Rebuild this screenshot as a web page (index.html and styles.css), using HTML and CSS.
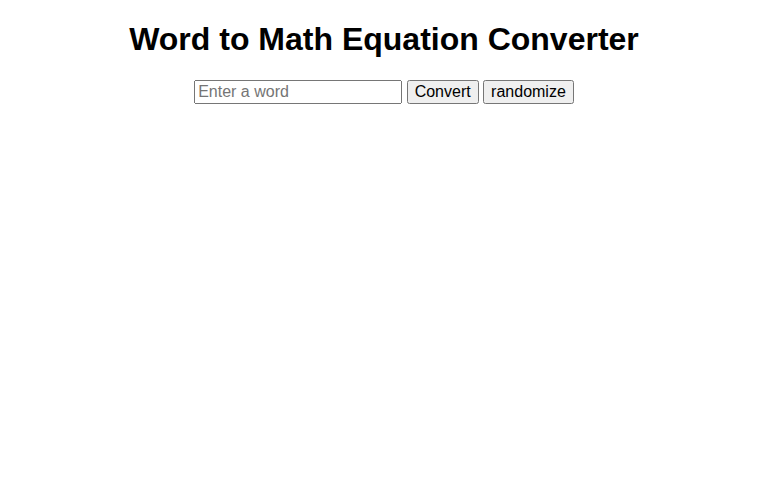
FILE: index.html
```html
<!DOCTYPE html>
<html>
<head>
<meta charset="utf-8">
<link rel="stylesheet" href="styles.css">
</head>
<body>
<h1 class="title">Word to Math Equation Converter</h1>
<div class="controls">
<input type="text" class="word-input" placeholder="Enter a word">
<button class="btn">Convert</button>
<button class="btn">randomize</button>
</div>
</body>
</html>
```
FILE: styles.css
```css
body {
  margin: 0;
  font-family: "Liberation Sans", Arial, sans-serif;
  text-align: center;
}
.title {
  font-size: 32px;
}
.controls input,
.controls button {
  font-family: "Liberation Sans", Arial, sans-serif;
  font-size: 16px;
}
.word-input {
  width: 200px;
}
```
